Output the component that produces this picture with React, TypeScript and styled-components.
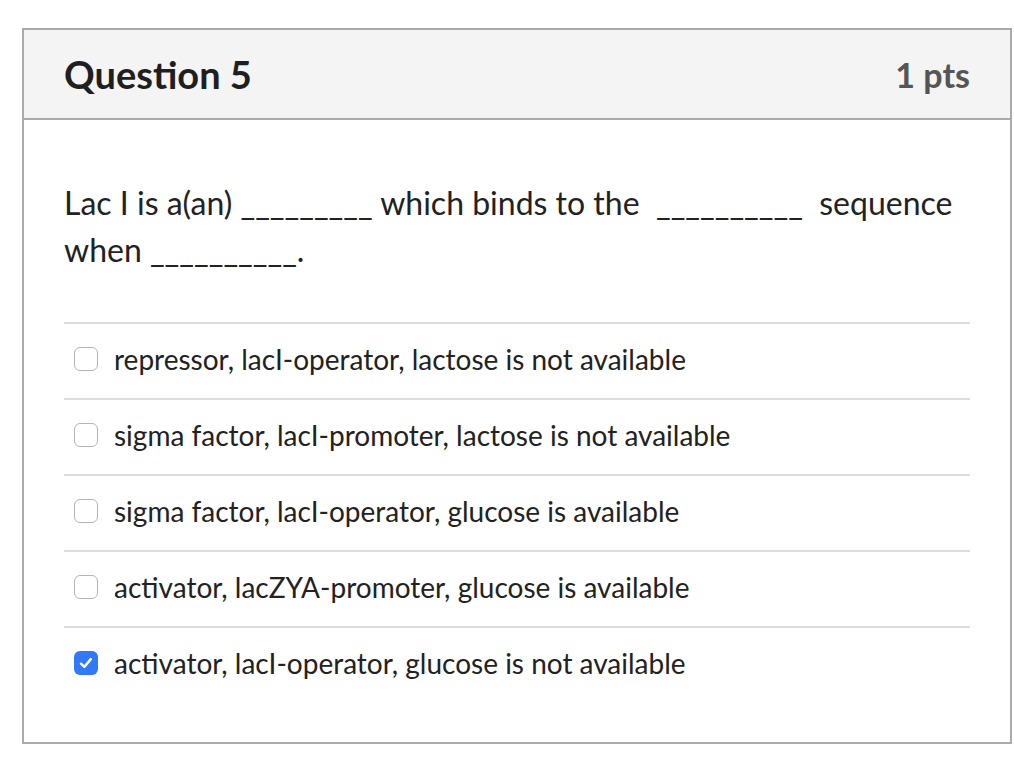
import React from 'react'
import styled, { createGlobalStyle } from 'styled-components'

const GlobalStyle = createGlobalStyle`
  html, body {
    margin: 0;
    padding: 0;
    background: #ffffff;
  }
  body {
    font-family: Lato, "Noto Sans", sans-serif;
    color: #2d3b45;
  }
`

const answers = [
  { text: 'repressor, lacI-operator, lactose is not available', checked: false },
  { text: 'sigma factor, lacI-promoter, lactose is not available', checked: false },
  { text: 'sigma factor, lacI-operator, glucose is available', checked: false },
  { text: 'activator, lacZYA-promoter, glucose is available', checked: false },
  { text: 'activator, lacI-operator, glucose is not available', checked: true },
]

const App: React.FC = () => {
  return (
    <>
      <GlobalStyle />
      <Page>
        <StyledCard>
          <StyledHeader>
            <StyledTitle>Question 5</StyledTitle>
            <StyledPoints>1 pts</StyledPoints>
          </StyledHeader>
          <StyledBody>
            <StyledQuestion>
              Lac I is a(an) _________ which binds to the&nbsp; __________&nbsp; sequence when __________.
            </StyledQuestion>
            <StyledAnswers>
              {answers.map((a) => (
                <StyledAnswer key={a.text}>
                  <Checkbox checked={a.checked}>
                    {a.checked && (
                      <svg width="16" height="16" viewBox="0 0 14 14">
                        <path
                          d="M2.6 7.6 L5.6 10.4 L11.2 3.6"
                          fill="none"
                          stroke="#fff"
                          strokeWidth="2.1"
                          strokeLinecap="round"
                          strokeLinejoin="round"
                        />
                      </svg>
                    )}
                  </Checkbox>
                  <StyledAnswerText>{a.text}</StyledAnswerText>
                </StyledAnswer>
              ))}
            </StyledAnswers>
          </StyledBody>
        </StyledCard>
      </Page>
    </>
  )
}

const Page = styled.div`
  padding: 28px 3px 0 22px;
  width: 1014px;
  box-sizing: border-box;
`

const StyledCard = styled.div`
  width: 990px;
  height: 716px;
  box-sizing: border-box;
  border: 2px solid #aaaaaa;
  background: #ffffff;
  display: flex;
  flex-direction: column;
`

const StyledHeader = styled.div`
  height: 90px;
  box-sizing: border-box;
  background: #f4f4f4;
  border-bottom: 2px solid #aaaaaa;
  display: flex;
  align-items: center;
  justify-content: space-between;
  padding: 0 40px 0 40px;
`

const StyledTitle = styled.div`
  font-size: 38px;
  font-weight: 700;
  color: #1f1f1f;
`

const StyledPoints = styled.div`
  font-size: 34px;
  font-weight: 700;
  color: #555555;
`

const StyledBody = styled.div`
  padding: 59px 40px 0 40px;
`

const StyledQuestion = styled.div`
  font-size: 32px;
  line-height: 47px;
  color: #222222;
  margin-bottom: 49px;
`

const StyledAnswers = styled.div`
  display: flex;
  flex-direction: column;
`

const StyledAnswer = styled.div`
  height: 76px;
  border-top: 2px solid #dddddd;
  box-sizing: border-box;
  display: flex;
  align-items: center;
  padding: 0 0 5px 10px;
  gap: 16px;
`

const Checkbox = styled.span<{ checked: boolean }>`
  width: 24px;
  height: 24px;
  box-sizing: border-box;
  border-radius: 6px;
  border: ${(p) => (p.checked ? 'none' : '1.5px solid #b4b4b4')};
  background: ${(p) => (p.checked ? '#3179f5' : '#ffffff')};
  display: flex;
  align-items: center;
  justify-content: center;
  flex-shrink: 0;
`

const StyledAnswerText = styled.span`
  font-size: 28px;
  color: #222222;
`

export default App
